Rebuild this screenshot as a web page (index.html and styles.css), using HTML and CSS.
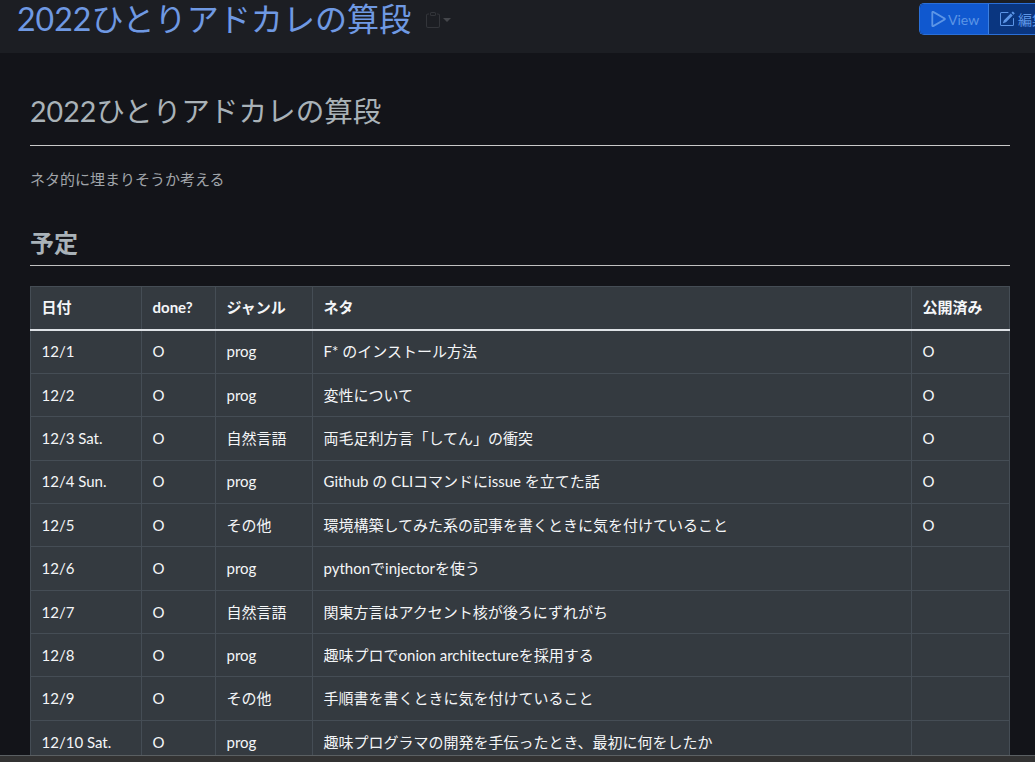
FILE: index.html
```html
<!DOCTYPE html>
<html lang="ja">
<head>
<meta charset="utf-8">
<title>2022ひとりアドカレの算段</title>
<link rel="stylesheet" href="styles.css">
</head>
<body>
<header class="navbar">
  <a class="brand">2022ひとりアドカレの算段</a>
  <span class="copy">
    <svg class="clip" viewBox="0 0 16 16" width="16" height="16" fill="currentColor"><path d="M4 1.5H3a2 2 0 0 0-2 2V14a2 2 0 0 0 2 2h10a2 2 0 0 0 2-2V3.500a2 2 0 0 0-2-2h-1v1h1a1 1 0 0 1 1 1V14a1 1 0 0 1-1 1H3a1 1 0 0 1-1-1V3.500a1 1 0 0 1 1-1h1v-1z"/><path d="M9.500 1a.5.5 0 0 1 .5.5v1a.5.5 0 0 1-.5.5h-3a.5.5 0 0 1-.5-.5v-1a.5.5 0 0 1 .5-.5h3zm-3-1A1.500 1.500 0 0 0 5 1.500v1A1.500 1.500 0 0 0 6.500 4h3A1.500 1.500 0 0 0 11 2.500v-1A1.500 1.500 0 0 0 9.500 0h-3z"/></svg>
    <span class="caret"></span>
  </span>
  <div class="btn-group">
    <a class="btn btn-active">
      <svg viewBox="0 0 16 16" width="16" height="16" fill="currentColor"><path d="M10.804 8 5 4.633v6.734L10.804 8zm.792-.696a.802.802 0 0 1 0 1.392l-6.363 3.692C4.713 12.69 4 12.345 4 11.692V4.308c0-.653.713-.998 1.233-.696l6.363 3.692z" transform="translate(-6.800 -6.400) scale(1.800)"/></svg>
      <span>View</span>
    </a>
    <a class="btn btn-edit">
      <svg viewBox="0 0 16 16" width="16" height="16" fill="currentColor"><path d="M15.502 1.940a.5.5 0 0 1 0 .706L14.459 3.690l-2-2L13.502.646a.5.5 0 0 1 .707 0l1.293 1.293zm-1.750 2.456-2-2L4.939 9.210a.5.5 0 0 0-.121.196l-.805 2.414a.25.25 0 0 0 .316.316l2.414-.805a.5.5 0 0 0 .196-.12l6.813-6.814z"/><path fill-rule="evenodd" d="M1 13.500A1.500 1.500 0 0 0 2.500 15h11a1.500 1.500 0 0 0 1.500-1.500v-6a.5.5 0 0 0-1 0v6a.5.5 0 0 1-.5.5h-11a.5.5 0 0 1-.5-.5v-11a.5.5 0 0 1 .5-.5H9a.5.5 0 0 0 0-1H2.500A1.500 1.500 0 0 0 1 2.500v11z"/></svg>
      <span>編集</span>
    </a>
  </div>
</header>
<main class="content">
  <h1 class="title">2022ひとりアドカレの算段</h1>
  <p class="lead">ネタ的に埋まりそうか考える</p>
  <h2 class="section">予定</h2>
  <table class="schedule">
    <colgroup>
      <col class="c-date"><col class="c-done"><col class="c-genre"><col class="c-topic"><col class="c-pub">
    </colgroup>
    <thead>
      <tr><th>日付</th><th>done?</th><th>ジャンル</th><th>ネタ</th><th>公開済み</th></tr>
    </thead>
    <tbody>
      <tr><td>12/1</td><td>O</td><td>prog</td><td>F* のインストール方法</td><td>O</td></tr>
      <tr><td>12/2</td><td>O</td><td>prog</td><td>変性について</td><td>O</td></tr>
      <tr><td>12/3 Sat.</td><td>O</td><td>自然言語</td><td>両毛足利方言「してん」の衝突</td><td>O</td></tr>
      <tr><td>12/4 Sun.</td><td>O</td><td>prog</td><td>Github の CLIコマンドにissue を立てた話</td><td>O</td></tr>
      <tr><td>12/5</td><td>O</td><td>その他</td><td>環境構築してみた系の記事を書くときに気を付けていること</td><td>O</td></tr>
      <tr><td>12/6</td><td>O</td><td>prog</td><td>pythonでinjectorを使う</td><td></td></tr>
      <tr><td>12/7</td><td>O</td><td>自然言語</td><td>関東方言はアクセント核が後ろにずれがち</td><td></td></tr>
      <tr><td>12/8</td><td>O</td><td>prog</td><td>趣味プロでonion architectureを採用する</td><td></td></tr>
      <tr><td>12/9</td><td>O</td><td>その他</td><td>手順書を書くときに気を付けていること</td><td></td></tr>
      <tr><td>12/10 Sat.</td><td>O</td><td>prog</td><td>趣味プログラマの開発を手伝ったとき、最初に何をしたか</td><td></td></tr>
    </tbody>
  </table>
</main>
<div class="statusbar"></div>
</body>
</html>
```
FILE: styles.css
```css
* { box-sizing: border-box; }
html, body { height: 100%; }
body {
  margin: 0;
  height: 100vh;
  overflow: hidden;
  display: flex;
  flex-direction: column;
  background: #131419;
  font-family: Lato, "Noto Sans CJK JP", sans-serif;
  font-size: 15px;
  line-height: 1.5;
  color: #a9aeb3;
}
.navbar {
  flex: none;
  height: 53px;
  background: #1c1e23;
  display: flex;
  align-items: flex-start;
  padding-left: 17px;
  overflow: hidden;
}
.brand {
  font-size: 32.100px;
  line-height: 38px;
  color: #6f99e3;
}
.copy {
  display: flex;
  align-items: center;
  gap: 2px;
  margin: 12px 0 0 14px;
  color: #33353a;
}
.clip { display: block; }
.caret {
  width: 0;
  height: 0;
  border: 4px solid transparent;
  border-top-color: #44464b;
  border-bottom-width: 0;
}
.btn-group {
  margin: 3px 0 0 auto;
  flex: none;
  width: 116px;
  height: 32px;
  display: flex;
  border: 1px solid #2a6fd8;
  border-right: 0;
  border-radius: 5px 0 0 5px;
  overflow: hidden;
  color: #5c95e6;
  font-size: 14px;
}
.btn {
  flex: none;
  display: flex;
  align-items: center;
  white-space: nowrap;
}
.btn-active {
  width: 69px;
  padding-left: 11px;
  gap: 1px;
  background: #1058cf;
  border-right: 1px solid #3b7fe0;
}
.btn-edit {
  width: 60px;
  padding-left: 10px;
  gap: 3px;
  background: #0a3680;
}
.content {
  flex: 1;
  min-height: 0;
  overflow: hidden;
  padding: 0 25px 0 30px;
}
.title {
  margin: 39px 0 0;
  height: 54px;
  font-size: 28.600px;
  font-weight: 400;
  line-height: 38px;
  color: #a9b2b8;
  border-bottom: 1px solid #c9c9c9;
}
.lead {
  margin: 21px 0 0;
  font-size: 15px;
  line-height: 24px;
  color: #a0a4a9;
}
.section {
  margin: 34px 0 0;
  height: 41px;
  font-size: 24px;
  font-weight: 700;
  line-height: 36px;
  color: #a9b2b8;
  border-bottom: 1px solid #c0c0c0;
}
.schedule {
  margin-top: 20px;
  width: 979px;
  table-layout: fixed;
  border-collapse: collapse;
  background: #343a40;
  color: #f4f6f8;
}
.c-date { width: 111px; }
.c-done { width: 74px; }
.c-genre { width: 97px; }
.c-topic { width: 599px; }
.c-pub { width: 98px; }
.schedule th, .schedule td {
  border: 1px solid #454d55;
  padding: 9.930px 10.500px;
  text-align: left;
  vertical-align: middle;
  height: 43.360px;
  line-height: 22.500px;
}
.schedule th {
  font-weight: 700;
  height: 43px;
  padding: 8px 10.500px 10px;
  border-bottom: 2px solid #dee2e6;
}
.statusbar {
  position: fixed;
  left: 0;
  right: 0;
  bottom: 0;
  height: 7px;
  background: #333333;
  border-top: 1px solid #5a5f62;
}
```
